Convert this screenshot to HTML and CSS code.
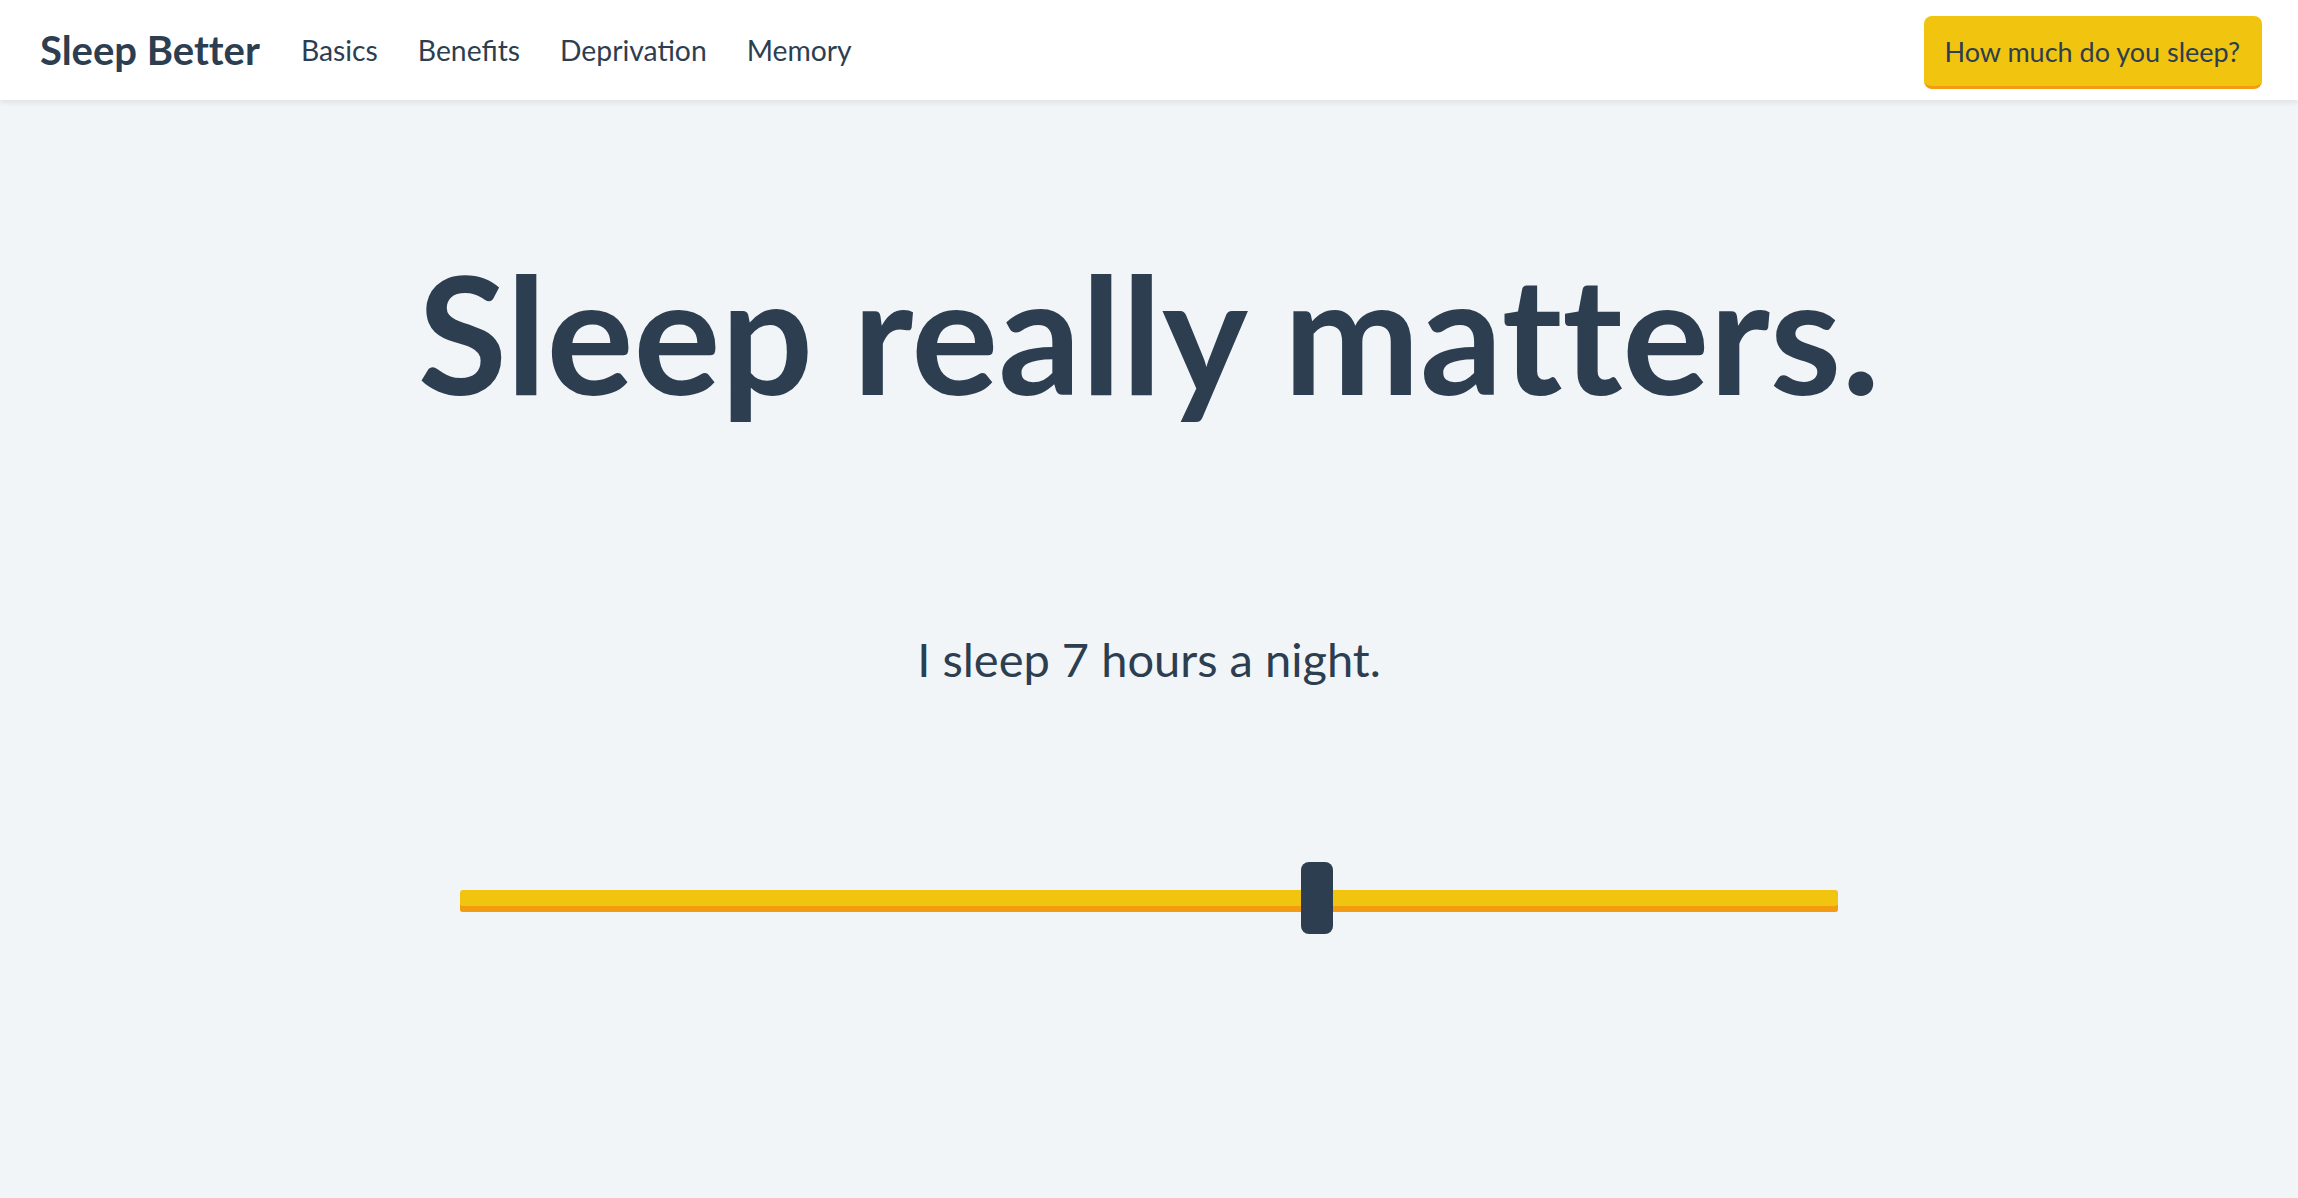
FILE: index.html
```html
<!DOCTYPE html>
<html lang="en">
<head>
  <meta charset="UTF-8">
  <title>Sleep Better</title>
  <meta name="viewport" content="width=device-width, initial-scale=1.0">
  <link rel="stylesheet" href="styles.css">
</head>
<body>
  <nav class="topbar">
    <a class="brand" href="#">Sleep Better</a>
    <ul class="nav-links">
      <li><a href="#basics">Basics</a></li>
      <li><a href="#benefits">Benefits</a></li>
      <li><a href="#deprivation">Deprivation</a></li>
      <li><a href="#memory">Memory</a></li>
    </ul>
    <a class="cta" href="#hours">How much do you sleep?</a>
  </nav>

  <main class="hero">
    <h1>Sleep really matters.</h1>
    <p class="hours" id="hoursText">I sleep 7 hours a night.</p>
    <input class="slider" type="range" id="hours" min="2" max="10" step="1" value="7">
  </main>

  <script>
    const slider = document.getElementById('hours');
    const hoursText = document.getElementById('hoursText');

    slider.addEventListener('input', () => {
      const h = slider.value;
      hoursText.textContent = `I sleep ${h} hour${h == 1 ? '' : 's'} a night.`;
    });
  </script>
</body>
</html>
```

FILE: styles.css
```css
body {
  margin: 0;
  font-family: Lato, 'Open Sans', sans-serif;
  background-color: #f1f5f8;
  color: #2c3e50;
}
a {
  color: inherit;
  text-decoration: none;
}
.topbar {
  height: 100px;
  background-color: white;
  box-shadow: 0 3px 5px rgba(0, 0, 0, 0.07);
  display: flex;
  align-items: center;
  padding: 0 36px 0 40px;
  box-sizing: border-box;
}
.brand {
  font-size: 40px;
  font-weight: 700;
  font-variant-ligatures: none;
}
.nav-links {
  list-style: none;
  display: flex;
  gap: 40px;
  margin: 0 0 0 41px;
  padding: 0;
  flex: 1;
}
.nav-links a {
  font-size: 28.3px;
}
.cta {
  background-color: #f1c40f;
  border-bottom: 3px solid #f39c12;
  border-radius: 8px;
  padding: 0 22px 0 21px;
  height: 70px;
  margin-top: 5px;
  display: flex;
  align-items: center;
  font-size: 27px;
}
.hero {
  display: flex;
  flex-direction: column;
  align-items: center;
  text-align: center;
}
.hero h1 {
  font-size: 163px;
  font-weight: 700;
  font-variant-ligatures: none;
  margin: 135px 0 0;
  line-height: 1.2;
}
.hours {
  font-size: 47px;
  margin: 200px 0 0;
}

/* range input: yellow bar with an orange lip, tall dark handle */
.slider {
  -webkit-appearance: none;
  appearance: none;
  width: 60%;
  height: 72px;
  margin: 178px 0 0;
  background: transparent;
  outline: none;
}
.slider::-webkit-slider-runnable-track {
  height: 22px;
  background: #f1c40f;
  box-shadow: inset 0 -6px 0 #f39c12;
  border-radius: 3px;
}
.slider::-webkit-slider-thumb {
  -webkit-appearance: none;
  width: 32px;
  height: 72px;
  margin-top: -28px;
  border-radius: 8px;
  background: #2c3e50;
  cursor: pointer;
}
```
